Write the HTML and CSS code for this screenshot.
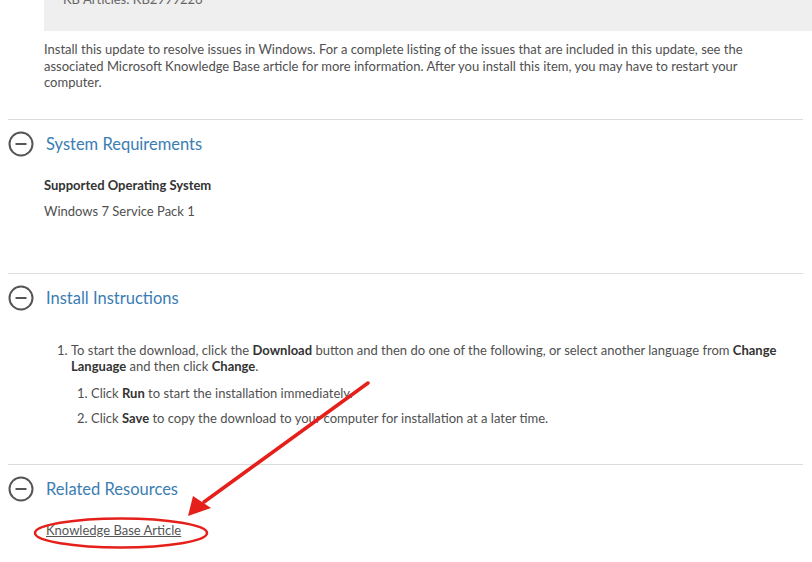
FILE: index.html
```html
<!DOCTYPE html>
<html lang="en">
<head>
    <meta charset="UTF-8">
    <title>Update for Windows 7 - Details</title>
    <link rel="stylesheet" href="styles.css">
</head>
<body>

    <div class="page">
        <div class="summary">
            <p>KB Articles: KB2999226</p>
        </div>
        <p class="desc">Install this update to resolve issues in Windows. For a complete listing of the issues that are included in this update, see the associated Microsoft Knowledge Base article for more information. After you install this item, you may have to restart your computer.</p>

        <div class="section sysreq">
            <h2 class="section-title">
                <svg class="toggle" width="26" height="26" viewBox="0 0 26 26"><circle cx="13" cy="13" r="11.5" fill="none" stroke="#555" stroke-width="2"/><line x1="7.5" y1="13" x2="18.5" y2="13" stroke="#555" stroke-width="2"/></svg>
                System Requirements
            </h2>
            <div class="section-body">
                <p class="label">Supported Operating System</p>
                <p>Windows 7 Service Pack 1</p>
            </div>
        </div>

        <div class="section install">
            <h2 class="section-title">
                <svg class="toggle" width="26" height="26" viewBox="0 0 26 26"><circle cx="13" cy="13" r="11.5" fill="none" stroke="#555" stroke-width="2"/><line x1="7.5" y1="13" x2="18.5" y2="13" stroke="#555" stroke-width="2"/></svg>
                Install Instructions
            </h2>
            <div class="section-body">
                <ol class="steps">
                    <li>To start the download, click the <b>Download</b> button and then do one of the following, or select another language from <b>Change Language</b> and then click <b>Change</b>.
                        <ol class="substeps">
                            <li>Click <b>Run</b> to start the installation immediately.</li>
                            <li>Click <b>Save</b> to copy the download to your computer for installation at a later time.</li>
                        </ol>
                    </li>
                </ol>
            </div>
        </div>

        <div class="section related">
            <h2 class="section-title">
                <svg class="toggle" width="26" height="26" viewBox="0 0 26 26"><circle cx="13" cy="13" r="11.5" fill="none" stroke="#555" stroke-width="2"/><line x1="7.5" y1="13" x2="18.5" y2="13" stroke="#555" stroke-width="2"/></svg>
                Related Resources
            </h2>
            <div class="section-body">
                <a class="kb-link" href="#">Knowledge Base Article</a>
            </div>
        </div>
    </div>

    <!-- red annotation drawn over the page -->
    <svg class="markup" width="812" height="562" viewBox="0 0 812 562">
        <ellipse cx="121" cy="533" rx="86" ry="14.5" fill="none" stroke="#e5201b" stroke-width="2.5"/>
        <path d="M368 383 L204 502" stroke="#e5201b" stroke-width="3.5" stroke-linecap="round" fill="none"/>
        <polygon points="188,516 193,496 211,508" fill="#e5201b"/>
    </svg>

</body>
</html>
```

FILE: styles.css
```css
body {
    margin: 0;
    font-family: Lato, "Open Sans", sans-serif;
    font-size: 13px;
    color: #505050;
    background: #fff;
    overflow: hidden;
}
p {
    margin: 0;
}
.page {
    padding: 0 9px 0 8px;
}
.summary {
    margin: -9px -9px 0 36px;
    height: 40px;
    background-color: #efefef;
    padding: 0 19px;
    line-height: 16px;
    color: #666;
}
.desc {
    padding: 10px 20px 0 36px;
    line-height: 16.5px;
}
.section {
    border-top: 1px solid #dcdcdc;
}
.desc + .section {
    margin-top: 28px;
}
.section-title {
    display: flex;
    align-items: center;
    gap: 12px;
    margin: 11px 0 0;
    font-weight: normal;
    font-size: 16.5px;
    color: #3b7db3;
    height: 26px;
}
.toggle {
    flex: none;
}
.sysreq .section-body {
    padding: 15px 0 49px 36px;
    line-height: 26px;
}
.label {
    color: #333;
    font-weight: bold;
}
.install .section-body {
    padding: 31px 0 28px 0;
}
.steps {
    margin: 0;
    padding-left: 63px;
    line-height: 16.5px;
}
.steps b, .substeps b {
    color: #333;
    font-weight: bold;
}
.substeps {
    margin: 10px 0 0;
    padding-left: 20px;
}
.substeps li {
    margin-bottom: 9px;
}
.related .section-body {
    padding: 20px 0 0 38px;
}
.kb-link {
    color: #555;
    text-decoration: underline;
}
.markup {
    position: absolute;
    left: 0;
    top: 0;
    pointer-events: none;
}
```
